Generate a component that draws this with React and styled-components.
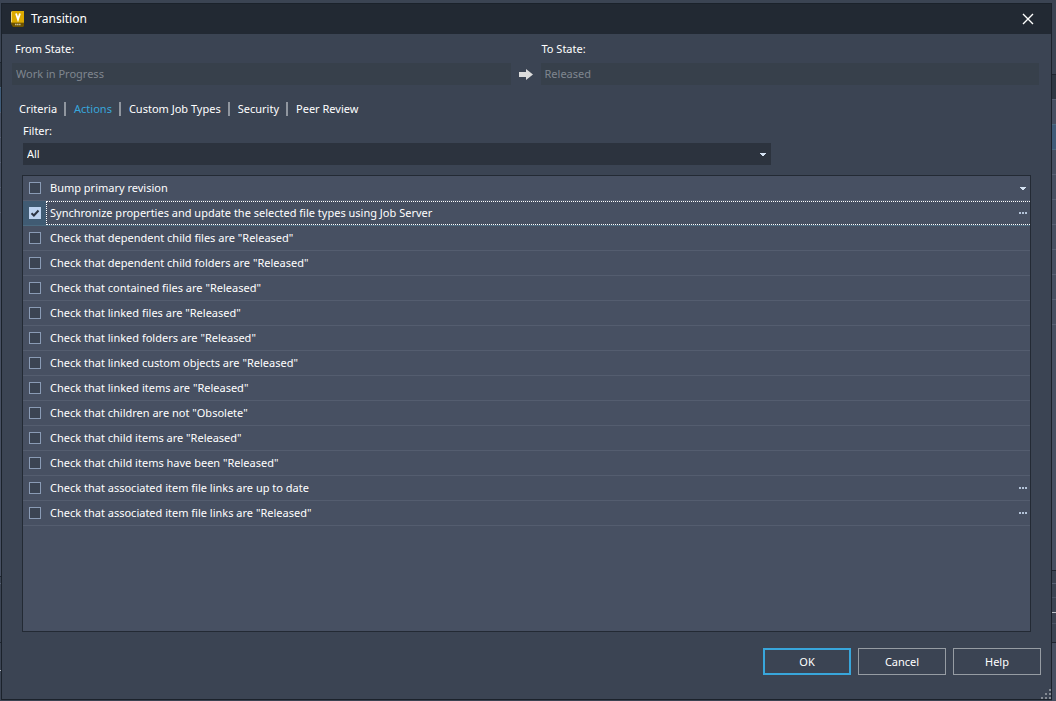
import React, { useState } from 'react';
import styled, { createGlobalStyle, css } from 'styled-components';

const GlobalStyle = createGlobalStyle`
  * {
    box-sizing: border-box;
  }
  body {
    margin: 0;
    background: #3b4453;
    font-family: "Noto Sans", "Open Sans", sans-serif;
    font-size: 11px;
    line-height: 16px;
    color: #fff;
  }
  button, input, select {
    font: inherit;
    color: inherit;
  }
`;

const Desktop = styled.div`
  display: grid;
  grid-template-columns: 1px minmax(0, 1fr) 4px;
  min-height: 100vh;
`;

const Strip = styled.div`
  display: flex;
  flex-direction: column;
  background: #475062;
`;

const StripPart = styled.div`
  height: ${props => props.$height}px;
  background: ${props => props.$color};
  border-top: 1px solid ${props => props.$line || props.$color};
`;

const Dialog = styled.main`
  position: relative;
  display: flex;
  flex-direction: column;
  margin: 3px 0 1px;
  border: 1px solid #1b222b;
  background: #3b4453;
`;

const TitleBar = styled.header`
  display: flex;
  align-items: center;
  gap: 6px;
  height: 30px;
  padding: 0 17px 0 8px;
  background: #222933;
`;

const Title = styled.h1`
  flex: 1;
  margin: 0;
  font-size: 12px;
  line-height: 18px;
  font-weight: normal;
`;

const CloseBtn = styled.button`
  display: flex;
  padding: 0;
  border: none;
  background: none;
`;

const States = styled.div`
  display: grid;
  grid-template-columns: 1fr 14px 1fr;
  column-gap: 8px;
  padding: 7px 12px 0 10px;
`;

const StateField = styled.div`
  display: flex;
  flex-direction: column;
  gap: 6px;
`;

const StateLabel = styled.label`
  padding-left: ${props => (props.$inset ? 3 : 1)}px;
`;

const StateInput = styled.input`
  width: 100%;
  height: 22px;
  padding: 0 4px 2px;
  border: none;
  background: #37404b;
  color: #7f868f;
`;

const ArrowCell = styled.div`
  display: flex;
  align-items: flex-end;
  padding-bottom: 5px;
`;

const Tabs = styled.nav`
  display: flex;
  padding: 16px 17px 0;
`;

const Tab = styled.a`
  display: flex;
  align-items: center;
  color: ${props => (props.$active ? '#38a6db' : '#fff')};
  text-decoration: none;

  &:not(:first-child)::before {
    content: '';
    width: 2px;
    height: 14px;
    margin: 0 8px 0 7px;
    background: #90969f;
  }
`;

const Panel = styled.section`
  display: flex;
  flex-direction: column;
  flex: 1;
  padding: 6px 20px 0;
`;

const FilterLabel = styled.label`
  padding-left: 1px;
`;

const FilterBox = styled.div`
  position: relative;
  margin: 4px 260px 0 1px;
`;

const FilterSelect = styled.select`
  display: block;
  appearance: none;
  width: 100%;
  height: 22px;
  padding: 0 20px 0 4px;
  border: none;
  border-radius: 0;
  background: #2c333e;
`;

const SelectCaret = styled.span`
  position: absolute;
  right: 5px;
  top: 10px;
  display: flex;
  pointer-events: none;
`;

const ActionList = styled.ul`
  flex: 1;
  min-height: 380px;
  margin: 10px 0 0;
  padding: 0;
  border: 1px solid #232a34;
  background: #475062;
  list-style: none;
`;

const ActionRow = styled.li`
  display: flex;
  height: 25px;
  border-bottom: 1px solid ${props => (props.$active ? '#4b6a80' : '#545d6f')};
`;

const CheckCell = styled.span`
  display: flex;
  align-items: center;
  width: 23px;
  padding-left: 6px;
  background: ${props => (props.$active ? '#405b73' : 'none')};
`;

const CheckBox = styled.input`
  appearance: none;
  width: 12px;
  height: 12px;
  margin: 0;
  border: 1px solid #8a9bb5;
  background: #3b4453;

  &:checked {
    border-color: #bdd3f0;
    background: #bdd3f0 url("data:image/svg+xml,%3Csvg xmlns='http://www.w3.org/2000/svg' viewBox='0 0 10 10'%3E%3Cpath d='M1.5 5.2l2.4 2.3 4.6-5' fill='none' stroke='%232c3544' stroke-width='2'/%3E%3C/svg%3E") center / 10px no-repeat;
  }
`;

const RowBody = styled.div`
  display: flex;
  align-items: center;
  flex: 1;
  padding: 0 2px 0 3px;
  border: 1px solid transparent;
  ${props => props.$active && css`
    border: 1px dotted #fff;
    border-right: none;
    padding-right: 3px;
  `}
`;

const RowLabel = styled.label`
  flex: 1;
`;

const RowBtn = styled.button`
  display: flex;
  justify-content: center;
  width: 8px;
  padding: 0;
  border: none;
  background: none;
`;

const Footer = styled.footer`
  display: flex;
  justify-content: flex-end;
  gap: 7px;
  padding: 16px 10px 24px;
`;

const FooterBtn = styled.button`
  width: 88px;
  height: 27px;
  padding: 0;
  border: ${props => (props.$primary ? '2px solid #38a6db' : '1px solid #969ca3')};
  background: #3b4453;
`;

const ResizeGrip = styled.span`
  position: absolute;
  right: 0;
  bottom: 0;
  display: flex;
`;

function VaultIcon() {
  return (
    <svg width="15" height="16" viewBox="0 0 15 16">
      <path d="M2 0h12v11H2z" fill="#dba900" />
      <path d="M2 0L1 1v12l1-2z" fill="#f4d675" />
      <path d="M2 11h12v4l-1 1H3l-2-3z" fill="#6d5300" />
      <path d="M1 12l1-1h12v1z" fill="#b58b00" />
      <path d="M6 2.5l2 6 2-6" fill="none" stroke="#fff" strokeWidth="1.8" />
      <path d="M5 13.5h6" stroke="#c9bd93" strokeWidth="1.6" strokeDasharray="1.6 .4" />
    </svg>
  );
}

function Caret() {
  return (
    <svg width="6" height="3" viewBox="0 0 6 3" shapeRendering="crispEdges">
      <path d="M0 0h6v1H0zM1 1h4v1H1zM2 2h2v1H2z" fill="#d5e2f2" />
    </svg>
  );
}

function Dots() {
  return (
    <svg width="8" height="2" viewBox="0 0 8 2" shapeRendering="crispEdges">
      <path d="M0 0h2v2H0zM3 0h2v2H3zM6 0h2v2H6z" fill="#b4c3d8" />
    </svg>
  );
}

const tabs = ['Criteria', 'Actions', 'Custom Job Types', 'Security', 'Peer Review'];

const actions = [
  { name: 'Bump primary revision', control: 'menu' },
  { name: 'Synchronize properties and update the selected file types using Job Server', control: 'more' },
  { name: 'Check that dependent child files are "Released"' },
  { name: 'Check that dependent child folders are "Released"' },
  { name: 'Check that contained files are "Released"' },
  { name: 'Check that linked files are "Released"' },
  { name: 'Check that linked folders are "Released"' },
  { name: 'Check that linked custom objects are "Released"' },
  { name: 'Check that linked items are "Released"' },
  { name: 'Check that children are not "Obsolete"' },
  { name: 'Check that child items are "Released"' },
  { name: 'Check that child items have been "Released"' },
  { name: 'Check that associated item file links are up to date', control: 'more' },
  { name: 'Check that associated item file links are "Released"', control: 'more' },
];

// slices of the main window that stay visible beside the dialog
const leftParts = [
  { height: 62, color: '#3b4453' },
  { height: 25, color: '#2e3743', line: '#1f2630' },
  { height: 25, color: '#3f5b78', line: '#4b6a80' },
  { height: 25, color: '#475062', line: '#576073' },
  { height: 25, color: '#475062', line: '#576073' },
  { height: 25, color: '#475062', line: '#576073' },
  { height: 25, color: '#475062', line: '#576073' },
  { height: 364, color: '#475062', line: '#576073' },
  { height: 7, color: '#3b4453', line: '#1f2630' },
  { height: 59, color: '#3b4453', line: '#576073' },
  { height: 28, color: '#3b4453', line: '#1f2630' },
  { height: 31, color: '#3b4453', line: '#b9bec5' },
];

const rightParts = [
  { height: 74, color: '#3b4453' },
  { height: 25, color: '#2e3743', line: '#1f2630' },
  { height: 25, color: '#475062', line: '#576073' },
  { height: 25, color: '#3f5b78', line: '#4b6a80' },
  { height: 25, color: '#475062', line: '#4b6a80' },
  { height: 25, color: '#475062', line: '#576073' },
  { height: 25, color: '#475062', line: '#576073' },
  { height: 25, color: '#475062', line: '#576073' },
  { height: 25, color: '#475062', line: '#576073' },
  { height: 25, color: '#475062', line: '#576073' },
  { height: 25, color: '#475062', line: '#576073' },
  { height: 246, color: '#475062', line: '#576073' },
  { height: 13, color: '#3b4453', line: '#1f2630' },
  { height: 14, color: '#3b4453', line: '#576073' },
  { height: 15, color: '#3b4453', line: '#4b5465' },
  { height: 11, color: '#3b4453', line: '#b9bec5' },
  { height: 19, color: '#3b4453', line: '#4b5465' },
  { height: 1, color: '#1f2630' },
];

export default function App() {
  const [activeTab, setActiveTab] = useState('Actions');
  const [checked, setChecked] = useState([1]);
  const [current, setCurrent] = useState(1);

  function toggleAction(index) {
    setCurrent(index);
    setChecked(checked.includes(index) ? checked.filter(i => i !== index) : [...checked, index]);
  }

  return (
    <Desktop>
      <GlobalStyle />
      <Strip>
        {leftParts.map((part, i) => (
          <StripPart key={i} $height={part.height} $color={part.color} $line={part.line} />
        ))}
      </Strip>
      <Dialog>
        <TitleBar>
          <VaultIcon />
          <Title>Transition</Title>
          <CloseBtn aria-label="Close">
            <svg width="12" height="12" viewBox="0 0 12 12">
              <path d="M1 1l10 10M11 1L1 11" stroke="#fff" strokeWidth="1.4" />
            </svg>
          </CloseBtn>
        </TitleBar>
        <States>
          <StateField>
            <StateLabel htmlFor="from" $inset>From State:</StateLabel>
            <StateInput id="from" value="Work in Progress" disabled />
          </StateField>
          <ArrowCell>
            <svg width="14" height="11" viewBox="0 0 14 11">
              <path d="M0 3h7V0l7 5.5L7 11V8H0z" fill="#dcdcdc" />
            </svg>
          </ArrowCell>
          <StateField>
            <StateLabel htmlFor="to">To State:</StateLabel>
            <StateInput id="to" value="Released" disabled />
          </StateField>
        </States>
        <Tabs>
          {tabs.map(tab => (
            <Tab key={tab} href="#" $active={tab === activeTab} onClick={() => setActiveTab(tab)}>{tab}</Tab>
          ))}
        </Tabs>
        <Panel>
          <FilterLabel htmlFor="filter">Filter:</FilterLabel>
          <FilterBox>
            <FilterSelect id="filter">
              <option>All</option>
            </FilterSelect>
            <SelectCaret><Caret /></SelectCaret>
          </FilterBox>
          <ActionList>
            {actions.map((action, index) => (
              <ActionRow key={action.name} $active={index === current}>
                <CheckCell $active={index === current}>
                  <CheckBox
                    type="checkbox"
                    id={`action-${index}`}
                    checked={checked.includes(index)}
                    onChange={() => toggleAction(index)}
                  />
                </CheckCell>
                <RowBody $active={index === current}>
                  <RowLabel htmlFor={`action-${index}`}>{action.name}</RowLabel>
                  {action.control && (
                    <RowBtn aria-label="Options">
                      {action.control === 'menu' ? <Caret /> : <Dots />}
                    </RowBtn>
                  )}
                </RowBody>
              </ActionRow>
            ))}
          </ActionList>
        </Panel>
        <Footer>
          <FooterBtn $primary>OK</FooterBtn>
          <FooterBtn>Cancel</FooterBtn>
          <FooterBtn>Help</FooterBtn>
        </Footer>
        <ResizeGrip>
          <svg width="10" height="10" viewBox="0 0 10 10" shapeRendering="crispEdges">
            <path d="M8 0h2v2H8zM4 4h2v2H4zM8 4h2v2H8zM0 8h2v2H0zM4 8h2v2H4zM8 8h2v2H8z" fill="#858b94" />
          </svg>
        </ResizeGrip>
      </Dialog>
      <Strip>
        {rightParts.map((part, i) => (
          <StripPart key={i} $height={part.height} $color={part.color} $line={part.line} />
        ))}
      </Strip>
    </Desktop>
  );
}
